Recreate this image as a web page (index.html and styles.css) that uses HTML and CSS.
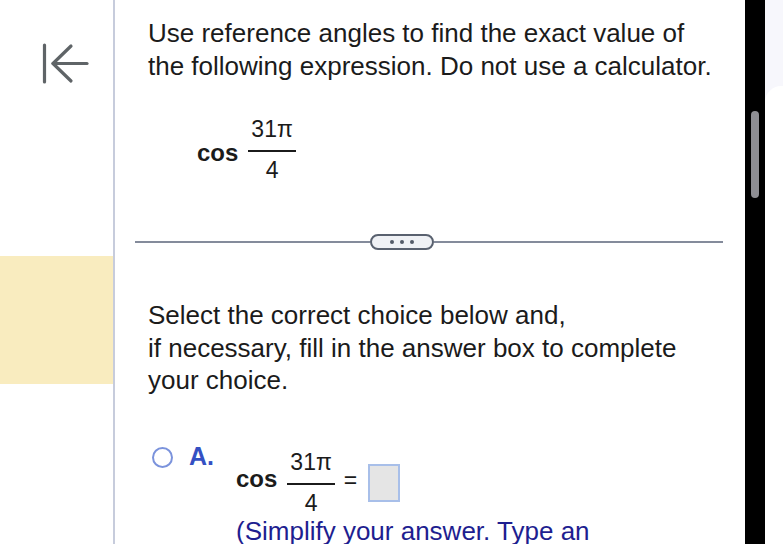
FILE: index.html
```html
<!DOCTYPE html>
<html lang="en">
<head>
<meta charset="utf-8">
<title>Reference angles</title>
<link rel="stylesheet" href="styles.css">
</head>
<body>
<div class="app">
  <aside class="sidebar">
    <button class="collapse" aria-label="Collapse">
      <svg width="48" height="46" viewBox="0 0 48 46" fill="none" stroke="#5f6467" stroke-width="3.2" stroke-linecap="round" stroke-linejoin="round">
        <line x1="3.5" y1="4" x2="3.5" y2="41"/>
        <line x1="12" y1="22.5" x2="46" y2="22.5"/>
        <polyline points="30,5 12,22.5 30,40"/>
      </svg>
    </button>
    <div class="highlight"></div>
  </aside>
  <main class="main">
    <p class="question">Use reference angles to find the exact value of<br>the following expression. Do not use a calculator.</p>
    <div class="expr expr-q">
      <span class="fn fn-q">cos</span>
      <span class="frac"><span class="num">31π</span><span class="den">4</span></span>
    </div>
    <div class="divider">
      <span class="rule rule-left"></span>
      <span class="more"><i></i><i></i><i></i></span>
      <span class="rule rule-right"></span>
    </div>
    <p class="prompt">Select the correct choice below and,<br>if necessary, fill in the answer box to complete<br>your choice.</p>
    <div class="option">
      <span class="radio"></span>
      <span class="label">A.</span>
      <div class="option-body">
        <div class="expr expr-a">
          <span class="fn fn-a">cos</span>
          <span class="frac"><span class="num">31π</span><span class="den">4</span></span>
          <span class="eq">=</span>
          <span class="answer-box"></span>
        </div>
        <p class="hint">(Simplify your answer. Type an</p>
      </div>
    </div>
  </main>
  <div class="edge"><div class="thumb"></div></div>
  <div class="side-panel"><div class="card"></div></div>
</div>
</body>
</html>
```

FILE: styles.css
```css
* { box-sizing: border-box; }
html, body { margin: 0; padding: 0; background: #ffffff; }
body { font-family: "Liberation Sans", Arial, sans-serif; color: #1b1b1b; }

.app {
  display: flex;
  width: 783px;
  height: 544px;
  overflow: hidden;
}

.sidebar {
  width: 115px;
  flex: none;
  border-right: 2px solid #c7ccdc;
  padding-top: 41px;
  display: flex;
  flex-direction: column;
}
.collapse {
  border: 0;
  background: none;
  padding: 0;
  margin-left: 41px;
  width: 48px;
  height: 46px;
  display: block;
}
.collapse svg { display: block; }
.highlight {
  margin-top: 169px;
  height: 128px;
  background: #f9ecbf;
}

.main {
  width: 630px;
  flex: none;
  padding-top: 17px;
  display: flex;
  flex-direction: column;
}
.question, .prompt {
  margin: 0 0 0 33px;
  font-size: 26px;
  line-height: 33px;
  white-space: nowrap;
}
.prompt { line-height: 32.5px; margin-top: 49px; }

.expr {
  display: flex;
  align-items: center;
}
.expr-q { margin: 35px 0 0 82px; }
.fn {
  font-weight: bold;
  font-size: 24px;
  margin-right: 10px;
}
.fn-q { margin-top: 6px; }
.fn-a { margin-bottom: 8px; }
.frac {
  display: flex;
  flex-direction: column;
  align-items: center;
  font-size: 23px;
  line-height: 23px;
}
.num {
  padding: 0 3px 9px;
  border-bottom: 2px solid #1b1b1b;
  align-self: stretch;
  text-align: center;
}
.den { padding-top: 7px; }

.divider {
  display: flex;
  align-items: center;
  margin: 52px 22px 0 20px;
  height: 16px;
}
.rule { height: 2px; background: #848b9b; }
.rule-left { width: 235px; }
.rule-right { flex: 1; }
.more {
  width: 64px;
  height: 16px;
  border: 2px solid #59616f;
  border-radius: 8px;
  background: #eff1f5;
  display: flex;
  justify-content: center;
  align-items: center;
  gap: 6px;
}
.more i {
  width: 4px;
  height: 4px;
  border-radius: 50%;
  background: #535b68;
}

.option {
  display: flex;
  align-items: flex-start;
  margin: 50px 0 0 37px;
}
.radio {
  width: 21px;
  height: 21px;
  border: 2px solid #7b93dc;
  border-radius: 50%;
  flex: none;
}
.label {
  margin: -3px 0 0 16px;
  font-weight: bold;
  font-size: 25px;
  line-height: 25px;
  color: #3450c3;
  width: 47px;
  flex: none;
}
.option-body { padding-top: 4px; }
.eq {
  font-size: 23px;
  margin: 0 11px 4px 9px;
}
.answer-box {
  width: 32px;
  height: 38px;
  border: 2px solid #a8bfe9;
  background: #e5e5e5;
}
.hint {
  margin: 0;
  font-size: 26px;
  line-height: 33px;
  color: #1e1e90;
  white-space: nowrap;
}

.edge {
  width: 20px;
  flex: none;
  background: #000000;
  padding: 111px 0 0 6px;
}
.thumb {
  width: 8px;
  height: 87px;
  border-radius: 4px;
  background: #8e8e93;
}
.side-panel {
  flex: 1;
  background: #f7f7fc;
  padding-top: 86px;
}
.card {
  height: 100%;
  background: #ffffff;
  border-top-left-radius: 16px;
}
```
